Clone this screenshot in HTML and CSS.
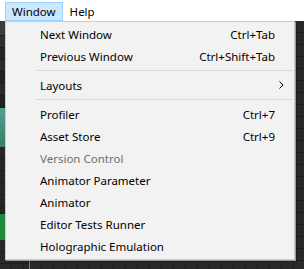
FILE: index.html
```html
<!DOCTYPE html>
<html lang="en">
<head>
  <meta charset="UTF-8" />
  <meta name="viewport" content="width=device-width, initial-scale=1.0"/>
  <title>Window Menu</title>
  <link rel="stylesheet" href="styles.css">
</head>
<body>

  <nav class="menubar">
    <div class="menubar-item open">Window</div>
    <div class="menubar-item">Help</div>
  </nav>

  <!-- editor behind the open menu -->
  <div class="scene">
    <div class="side-panel">
      <div class="band band-head"></div>
      <div class="band band-dark"></div>
      <div class="band band-deep"></div>
      <div class="band band-row"></div>
      <div class="band band-row"></div>
      <div class="band band-row"></div>
      <div class="band band-row"></div>
      <div class="band band-teal"></div>
      <div class="band band-list"></div>
      <div class="band band-green"></div>
      <div class="band band-grid"></div>
    </div>
    <div class="viewport">
      <div class="playhead"></div>
    </div>
  </div>

  <div class="dropdown">
    <div class="item"><span>Next Window</span><span class="key">Ctrl+Tab</span></div>
    <div class="item"><span>Previous Window</span><span class="key">Ctrl+Shift+Tab</span></div>
    <div class="sep"></div>
    <div class="item"><span>Layouts</span>
      <svg class="arrow" width="5" height="8" viewBox="0 0 5 8"><polyline points="0.5,0.5 4,4 0.5,7.5" fill="none" stroke="#000" stroke-width="1"/></svg>
    </div>
    <div class="sep"></div>
    <div class="item"><span>Profiler</span><span class="key">Ctrl+7</span></div>
    <div class="item"><span>Asset Store</span><span class="key">Ctrl+9</span></div>
    <div class="item disabled"><span>Version Control</span></div>
    <div class="item"><span>Animator Parameter</span></div>
    <div class="item"><span>Animator</span></div>
    <div class="item"><span>Editor Tests Runner</span></div>
    <div class="item"><span>Holographic Emulation</span></div>
  </div>

</body>
</html>
```

FILE: styles.css
```css
/* RESET & BASE */
* {
  box-sizing: border-box;
  margin: 0;
  padding: 0;
}

body {
  width: 304px;
  height: 269px;
  overflow: hidden;
  position: relative;
  font-family: "Noto Sans", "Open Sans", sans-serif;
  font-size: 11.5px;
  color: #000;
  background: #262626;
}

/* MENUBAR */
.menubar {
  height: 21px;
  background: #fff;
  display: flex;
  padding: 2px 0 2px 5px;
}

.menubar-item {
  height: 19px;
  line-height: 17px;
  padding: 0 6px;
  border: 1px solid transparent;
}

.menubar-item.open {
  background: #cce8ff;
  border-color: #99d1ff;
}

/* EDITOR BACKGROUND */
.scene {
  display: flex;
  height: 248px;
}

.side-panel {
  width: 30px;
  display: flex;
  flex-direction: column;
}

.band {
  border-bottom: 1px solid #1b1b1b;
}

.band-head { height: 15px; background: #3c3c3c; }
.band-dark { height: 12px; background: #2f2f2f; }
.band-deep { height: 12px; background: #252525; }
.band-row { height: 12px; background: #2a2a2a; }
.band-row:nth-child(odd) { background: #222; }
.band-teal {
  height: 39px;
  background: linear-gradient(#52a08c, #3b7c6b);
  border-bottom: none;
}

.band-list {
  height: 67px;
  background: repeating-linear-gradient(#262626 0 11px, #1c1c1c 11px 12px);
}

.band-green {
  height: 26px;
  background: #1e8b3d;
  border-bottom: none;
}

.band-grid,
.viewport {
  flex: 1;
  background-color: #282828;
  background-image:
    repeating-linear-gradient(90deg, transparent 0 11px, #1d1d1d 11px 12px),
    repeating-linear-gradient(transparent 0 11px, #1d1d1d 11px 12px);
}

.band-grid {
  border-bottom: none;
}

.viewport {
  position: relative;
}

.playhead {
  position: absolute;
  left: -1px;
  bottom: 0;
  width: 1px;
  height: 12px;
  background: #b07a1e;
}

/* DROPDOWN */
.dropdown {
  position: absolute;
  left: 5px;
  top: 21px;
  width: 290px;
  height: 239px;
  background: #f2f2f2;
  border: 1px solid #cccccc;
  box-shadow: 1px 1px 0 #9a9a9a, 2px 2px 0 rgba(0, 0, 0, 0.25);
  padding: 1px 1px 2px 1px;
}

.item {
  height: 22px;
  display: flex;
  align-items: center;
  justify-content: space-between;
  padding: 0 18px 0 33px;
  white-space: nowrap;
}

.item.disabled {
  color: #6d6d6d;
}

.arrow {
  margin-right: -9px;
}

.sep {
  height: 7px;
  margin-left: 29px;
  padding-top: 3px;
}

.sep::before {
  content: '';
  display: block;
  height: 1px;
  background: #d7d7d7;
}
```
